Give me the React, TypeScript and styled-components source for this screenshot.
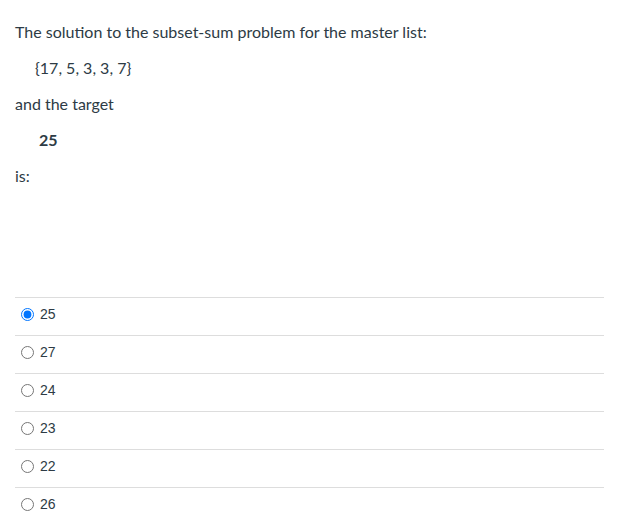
import styled, { createGlobalStyle } from 'styled-components';

const GlobalStyle = createGlobalStyle`
  body {
    margin: 0;
    background: #ffffff;
    font-family: Lato, "Noto Sans", sans-serif;
    color: #2d3b45;
  }
`;

const Question = styled.div`
  padding: 20px 13px 0 15px;
`;

const Text = styled.p<{ $indent?: number; $bold?: boolean }>`
  margin: 0 0 12px 0;
  padding-left: ${(p) => p.$indent || 0}px;
  font-size: 16px;
  line-height: 24px;
  font-weight: ${(p) => (p.$bold ? 700 : 400)};
`;

const Answers = styled.div`
  margin-top: 109px;
`;

const Row = styled.label`
  display: flex;
  align-items: flex-start;
  box-sizing: border-box;
  height: 38px;
  padding-top: 6px;
  border-top: 1px solid #dddddd;
  font-family: "Liberation Sans", Arial, sans-serif;
  font-size: 14px;
  line-height: 20px;
  cursor: pointer;
`;

const Radio = styled.input`
  width: 13px;
  height: 13px;
  margin: 4px 6px 0 6px;
`;

const answers = ["25", "27", "24", "23", "22", "26"];

export default function App() {
  return (
    <>
      <GlobalStyle />
      <Question>
        <Text>The solution to the subset-sum problem for the master list:</Text>
        <Text $indent={20}>{"{17, 5, 3, 3, 7}"}</Text>
        <Text>and the target</Text>
        <Text $indent={24} $bold>25</Text>
        <Text>is:</Text>
        <Answers>
          {answers.map((a, i) => (
            <Row key={a}>
              <Radio type="radio" name="answer" defaultChecked={i === 0} />
              {a}
            </Row>
          ))}
        </Answers>
      </Question>
    </>
  );
}
